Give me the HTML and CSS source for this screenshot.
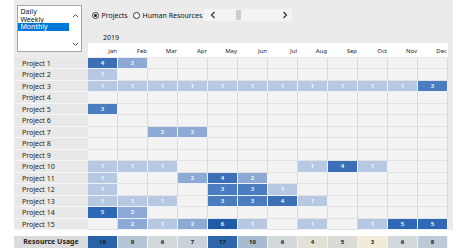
FILE: index.html
```html
<!DOCTYPE html>
<html>
<head>
<meta charset="utf-8">
<link rel="stylesheet" href="styles.css">
</head>
<body>
<div class="panel">
  <div class="top-left">
    <div class="listbox">
      <div class="items">
        <div class="item">Daily</div>
        <div class="item">Weekly</div>
        <div class="item sel">Monthly</div>
      </div>
      <div class="vscroll">
        <svg width="7" height="5" viewBox="0 0 7 5"><path d="M1 4 L3.5 1.5 L6 4" fill="none" stroke="#555" stroke-width="1"/></svg>
        <svg width="7" height="5" viewBox="0 0 7 5"><path d="M1 1 L3.5 3.5 L6 1" fill="none" stroke="#555" stroke-width="1"/></svg>
      </div>
    </div>
  </div>
  <div class="top-right">
    <div class="controls">
      <label class="opt"><span class="radio on"></span>Projects</label>
      <label class="opt"><span class="radio"></span>Human Resources</label>
      <div class="hscroll">
        <svg width="6" height="8" viewBox="0 0 6 8"><path d="M4.5 1 L1.5 4 L4.5 7" fill="none" stroke="#333" stroke-width="1.2"/></svg>
        <div class="track"><span class="thumb"></span></div>
        <svg width="6" height="8" viewBox="0 0 6 8"><path d="M1.5 1 L4.5 4 L1.5 7" fill="none" stroke="#333" stroke-width="1.2"/></svg>
      </div>
    </div>
    <div class="year">2019</div>
    <div class="months">
      <span>Jan</span><span>Feb</span><span>Mar</span><span>Apr</span><span>May</span><span>Jun</span><span>Jul</span><span>Aug</span><span>Sep</span><span>Oct</span><span>Nov</span><span>Dec</span>
    </div>
  </div>
  <div class="top-pad"></div>

  <div class="labels">
    <div>Project 1</div><div>Project 2</div><div>Project 3</div><div>Project 4</div><div>Project 5</div>
    <div>Project 6</div><div>Project 7</div><div>Project 8</div><div>Project 9</div><div>Project 10</div>
    <div>Project 11</div><div>Project 12</div><div>Project 13</div><div>Project 14</div><div>Project 15</div>
  </div>
  <div class="cells">
    <i class="v4">4</i><i class="v2">2</i><i></i><i></i><i></i><i></i><i></i><i></i><i></i><i></i><i></i><i></i>
    <i class="v1">1</i><i></i><i></i><i></i><i></i><i></i><i></i><i></i><i></i><i></i><i></i><i></i>
    <i class="v1">1</i><i class="v1">1</i><i class="v1">1</i><i class="v1">1</i><i class="v1">1</i><i class="v1">1</i><i class="v1">1</i><i class="v1">1</i><i class="v1">1</i><i class="v1">1</i><i class="v1">1</i><i class="v3">3</i>
    <i></i><i></i><i></i><i></i><i></i><i></i><i></i><i></i><i></i><i></i><i></i><i></i>
    <i class="v3">3</i><i></i><i></i><i></i><i></i><i></i><i></i><i></i><i></i><i></i><i></i><i></i>
    <i></i><i></i><i></i><i></i><i></i><i></i><i></i><i></i><i></i><i></i><i></i><i></i>
    <i></i><i></i><i class="v2">2</i><i class="v2">2</i><i></i><i></i><i></i><i></i><i></i><i></i><i></i><i></i>
    <i></i><i></i><i></i><i></i><i></i><i></i><i></i><i></i><i></i><i></i><i></i><i></i>
    <i></i><i></i><i></i><i></i><i></i><i></i><i></i><i></i><i></i><i></i><i></i><i></i>
    <i class="v1">1</i><i class="v1">1</i><i class="v1">1</i><i></i><i></i><i></i><i></i><i class="v1">1</i><i class="v4">4</i><i class="v1">1</i><i></i><i></i>
    <i class="v1">1</i><i></i><i></i><i class="v2">2</i><i class="v4">4</i><i class="v2">2</i><i></i><i></i><i></i><i></i><i></i><i></i>
    <i class="v1">1</i><i></i><i></i><i></i><i class="v3">3</i><i class="v3">3</i><i class="v1">1</i><i></i><i></i><i></i><i></i><i></i>
    <i class="v1">1</i><i class="v1">1</i><i class="v1">1</i><i></i><i class="v3">3</i><i class="v3">3</i><i class="v4">4</i><i class="v1">1</i><i></i><i></i><i></i><i></i>
    <i class="v5">5</i><i class="v2">2</i><i></i><i></i><i></i><i></i><i></i><i></i><i></i><i></i><i></i><i></i>
    <i></i><i class="v2">2</i><i class="v1">1</i><i class="v2">2</i><i class="v6">6</i><i class="v1">1</i><i></i><i class="v1">1</i><i></i><i class="v1">1</i><i class="v5">5</i><i class="v5">5</i>
  </div>
  <div class="side"></div>

  <div class="gap"></div>

  <div class="usage-label">Resource Usage</div>
  <div class="usage">
    <i class="u18">18</i><i class="u9">9</i><i class="u6">6</i><i class="u7">7</i><i class="u17">17</i><i class="u10">10</i><i class="u6">6</i><i class="u4">4</i><i class="u5">5</i><i class="u3">3</i><i class="u6">6</i><i class="u8">8</i>
  </div>
  <div class="usage-pad"></div>
</div>
</body>
</html>
```

FILE: styles.css
```css
* { box-sizing: border-box; }
html, body { margin: 0; padding: 0; }
body {
  width: 474px;
  height: 248px;
  overflow: hidden;
  background: #fff;
  font-family: "Noto Sans", "Open Sans", sans-serif;
  color: #222;
}
.panel {
  margin-left: 14px;
  width: 439px;
  height: 248px;
  background: #ebebeb;
  display: grid;
  grid-template-columns: 74px 360px 5px;
  grid-template-rows: 57.5px 172.5px 5.5px 12.5px;
}
.top-left { position: relative; }
.listbox {
  margin: 5px 0 0 3px;
  width: 65px;
  height: 47px;
  background: #fff;
  border: 1px solid #a8a8a8;
  display: flex;
}
.items { flex: 1; padding-top: 2px; }
.item {
  height: 7.5px;
  line-height: 7.5px;
  font-size: 7px;
  padding-left: 2.5px;
  color: #111;
  white-space: nowrap;
}
.item.sel { background: #0078d7; color: #fff; }
.vscroll {
  width: 12px;
  display: flex;
  flex-direction: column;
  justify-content: space-between;
  align-items: center;
  padding: 7px 0 4px;
}
.top-right { display: flex; flex-direction: column; }
.controls {
  margin-top: 9px;
  height: 12px;
  display: grid;
  grid-template-columns: 41px 71px 88px;
  padding-left: 4px;
  align-items: center;
}
.opt {
  display: flex;
  align-items: center;
  font-size: 7px;
  color: #111;
  white-space: nowrap;
}
.radio {
  width: 7px;
  height: 7px;
  border: 1px solid #333;
  border-radius: 50%;
  background: #fff;
  margin-right: 2.5px;
  display: flex;
  align-items: center;
  justify-content: center;
}
.radio.on::after {
  content: "";
  width: 3px;
  height: 3px;
  border-radius: 50%;
  background: #111;
}
.hscroll {
  height: 12px;
  background: #f4f4f4;
  display: flex;
  align-items: center;
  padding: 0 4px 0 6px;
}
.track { flex: 1; height: 12px; display: flex; align-items: center; padding-left: 20px; }
.thumb { width: 5px; height: 10px; background: #cdcdcd; }
.year {
  margin-top: 13px;
  height: 8px;
  line-height: 8px;
  font-size: 7px;
  padding-left: 15px;
  color: #111;
}
.months {
  margin-top: 1px;
  height: 13.5px;
  background: #fff;
  display: grid;
  grid-template-columns: repeat(12, 30px);
  align-items: end;
}
.months span {
  text-align: right;
  font-size: 6px;
  line-height: 8px;
  padding: 0 1px 2px 0;
  color: #222;
}
.labels { display: flex; flex-direction: column; }
.labels div {
  height: 11.5px;
  line-height: 11px;
  font-size: 7px;
  padding-left: 8px;
  background: #e8e8e8;
  border-bottom: 1px solid #f6f6f6;
  color: #222;
  white-space: nowrap;
}
.cells {
  display: grid;
  grid-template-columns: repeat(12, 30px);
  grid-auto-rows: 11.5px;
}
.cells i, .usage i {
  font-style: normal;
  display: flex;
  align-items: center;
  justify-content: center;
  font-size: 6px;
  font-weight: 600;
}
.cells i {
  background: #f3f3f3;
  border-right: 1px solid #d9d9d9;
  border-bottom: 1px solid #e2e2e2;
  color: #fff;
}
.cells i[class] { border-color: #eef2f8; }
.cells .v1 { background: #b6c8e2; }
.cells .v2 { background: #8da9d5; }
.cells .v3 { background: #4b7cc0; }
.cells .v4 { background: #3d6fb7; }
.cells .v5 { background: #2f69b6; }
.cells .v6 { background: #1f5ba8; }
.gap { grid-column: 1 / 4; background: #fff; }
.usage-label {
  background: #dcdcdc;
  font-size: 7px;
  font-weight: 700;
  text-align: center;
  line-height: 12.5px;
  color: #222;
  white-space: nowrap;
}
.usage {
  display: grid;
  grid-template-columns: repeat(12, 30px);
  background: #fff;
}
.usage i {
  color: #1d1d1d;
  font-weight: 700;
  border-right: 1px solid #f2f2f2;
}
.usage-pad { background: #fff; }
.usage .u18 { background: #2a62a8; color: #14243c; }
.usage .u17 { background: #2e66ab; color: #14243c; }
.u10 { background: #a7bbd1; }
.u9 { background: #b6c5d5; }
.u8 { background: #bdc9d6; }
.u7 { background: #cad2db; }
.u6 { background: #d3d8db; }
.u5 { background: #dadbd7; }
.u4 { background: #e3e1d7; }
.u3 { background: #f2ebd9; }
```
